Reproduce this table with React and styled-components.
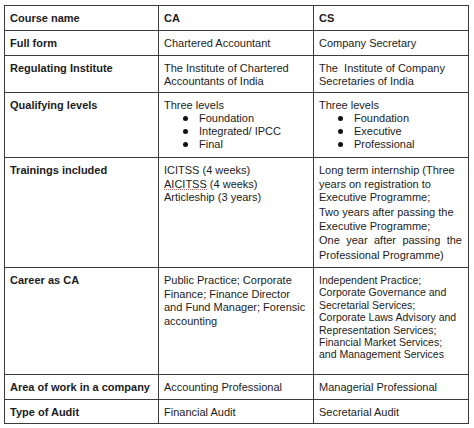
import React from "react";
import styled, { createGlobalStyle } from "styled-components";

const Global = createGlobalStyle`
  html, body { margin: 0; padding: 0; background: #ffffff; }
  body { font-family: "Liberation Sans", Arial, sans-serif; color: #1c1c1c; }
`;

const Table = styled.table`
  border-collapse: collapse;
  table-layout: fixed;
  width: 465px;
  margin: 5px 0 0 4px;
  font-size: 11px;
  line-height: 13px;
`;

const Row = styled.tr`
  height: ${(p) => p.$h}px;
`;

const Label = styled.th`
  border: 1px solid #3c3c3c;
  padding: 6px 6px 0 5px;
  vertical-align: top;
  text-align: left;
  font-weight: bold;
  white-space: nowrap;
`;

const Cell = styled.td`
  border: 1px solid #3c3c3c;
  padding: 6px 6px 0 5px;
  vertical-align: top;
  text-align: left;
  font-weight: ${(p) => (p.$bold ? "bold" : "normal")};
  white-space: nowrap;
`;

const Para = styled.div`
  line-height: ${(p) => p.$lh || 13}px;
  font-size: ${(p) => p.$fs || 11}px;
`;

const JustLine = styled.div`
  text-align: justify;
  text-align-last: justify;
  white-space: normal;
`;

const List = styled.ul`
  list-style: none;
  margin: 0;
  padding: 0 0 0 15px;
`;

const Item = styled.li`
  display: flex;
  align-items: center;
  height: 13px;
`;

const Dot = styled.span`
  flex: 0 0 20px;
  display: flex;
  align-items: center;
  &::before {
    content: "";
    width: 5px;
    height: 5px;
    margin-left: 4px;
    border-radius: 50%;
    background: #111;
  }
`;

const Misspelt = styled.span`
  position: relative;
  &::after {
    content: "";
    position: absolute;
    left: 0;
    right: 0;
    bottom: 0;
    height: 1px;
    background: repeating-linear-gradient(90deg, #d26a6a 0 1px, transparent 1px 2px);
  }
`;

const Bullets = ({ items }) => (
  <List>
    {items.map((t) => (
      <Item key={t}>
        <Dot />
        <span>{t}</span>
      </Item>
    ))}
  </List>
);

export default function App() {
  return (
    <>
      <Global />
      <Table>
        <colgroup>
          <col style={{ width: 154 }} />
          <col style={{ width: 155 }} />
          <col style={{ width: 155 }} />
        </colgroup>
        <tbody>
          <Row $h={25}>
            <Label>Course name</Label>
            <Cell $bold>CA</Cell>
            <Cell $bold>CS</Cell>
          </Row>
          <Row $h={25}>
            <Label>Full form</Label>
            <Cell>Chartered Accountant</Cell>
            <Cell>Company Secretary</Cell>
          </Row>
          <Row $h={37}>
            <Label>Regulating Institute</Label>
            <Cell>
              The Institute of Chartered
              <br />
              Accountants of India
            </Cell>
            <Cell>
              The{"\u00a0"} Institute of Company
              <br />
              Secretaries of India
            </Cell>
          </Row>
          <Row $h={65}>
            <Label>Qualifying levels</Label>
            <Cell>
              <Para>Three levels</Para>
              <Bullets items={["Foundation", "Integrated/ IPCC", "Final"]} />
            </Cell>
            <Cell>
              <Para>Three levels</Para>
              <Bullets items={["Foundation", "Executive", "Professional"]} />
            </Cell>
          </Row>
          <Row $h={110}>
            <Label>Trainings included</Label>
            <Cell>
              <Para $lh={13.5}>
                ICITSS (4 weeks)
                <br />
                <Misspelt>AICITSS</Misspelt> (4 weeks)
                <br />
                Articleship (3 years)
              </Para>
            </Cell>
            <Cell>
              <Para $lh={13.5}>
                Long term internship (Three
                <br />
                years on registration to
                <br />
                Executive Programme;
              </Para>
              <Para $lh={14.3}>
                Two years after passing the
                <br />
                Executive Programme;
              </Para>
              <Para $lh={14.5}>
                <JustLine>One year after passing the</JustLine>
                Professional Programme)
              </Para>
            </Cell>
          </Row>
          <Row $h={107}>
            <Label>Career as CA</Label>
            <Cell>
              <Para $lh={13.6}>
                Public Practice; Corporate
                <br />
                Finance; Finance Director
                <br />
                and Fund Manager; Forensic
                <br />
                accounting
              </Para>
            </Cell>
            <Cell>
              <Para $lh={12.4} $fs={10.5}>
                Independent Practice;
                <br />
                Corporate Governance and
                <br />
                Secretarial Services;
                <br />
                Corporate Laws Advisory and
                <br />
                Representation Services;
                <br />
                Financial Market Services;
                <br />
                and Management Services
              </Para>
            </Cell>
          </Row>
          <Row $h={25}>
            <Label>Area of work in a company</Label>
            <Cell>Accounting Professional</Cell>
            <Cell>Managerial Professional</Cell>
          </Row>
          <Row $h={24}>
            <Label>Type of Audit</Label>
            <Cell>Financial Audit</Cell>
            <Cell>Secretarial Audit</Cell>
          </Row>
        </tbody>
      </Table>
    </>
  );
}
